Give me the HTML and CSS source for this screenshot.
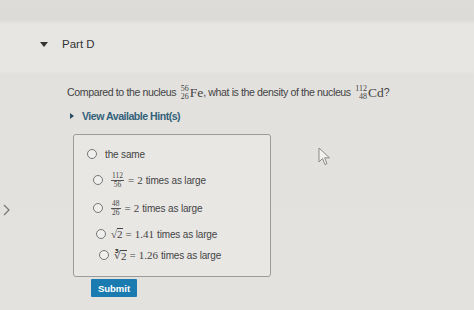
FILE: index.html
```html
<!DOCTYPE html>
<html>
<head>
<meta charset="utf-8">
<link rel="stylesheet" href="styles.css">
</head>
<body>
<div class="page">
  <div class="part-head">
    <span class="caret-down"></span>
    <span class="part-title">Part D</span>
  </div>
  <div class="question">
    Compared to the nucleus
    <span class="nuclide"><span class="scripts"><span class="a">56</span><span class="z">26</span></span><span class="sym">Fe</span></span>, what is the density of the nucleus
    <span class="nuclide"><span class="scripts"><span class="a">112</span><span class="z">48</span></span><span class="sym">Cd</span></span>?
  </div>
  <div class="hint">
    <span class="caret-right"></span>
    <span class="hint-text">View Available Hint(s)</span>
  </div>
  <div class="choices">
    <div class="opt o1"><span class="radio"></span><span class="lbl">the same</span></div>
    <div class="opt o2"><span class="radio"></span><span class="lbl"><span class="frac"><span class="num">112</span><span class="den">56</span></span><span class="m">=</span><span class="m">2</span> times as large</span></div>
    <div class="opt o3"><span class="radio"></span><span class="lbl"><span class="frac"><span class="num">48</span><span class="den">26</span></span><span class="m">=</span><span class="m">2</span> times as large</span></div>
    <div class="opt o4"><span class="radio"></span><span class="lbl"><span class="m root">√<span class="over">2</span></span><span class="m">=</span><span class="m">1.41</span> times as large</span></div>
    <div class="opt o5"><span class="radio"></span><span class="lbl"><span class="m root">∛<span class="over">2</span></span><span class="m">=</span><span class="m">1.26</span> times as large</span></div>
  </div>
  <button class="submit">Submit</button>
</div>
<svg class="cursor" width="14" height="20" viewBox="0 0 14 20"><path d="M1 1 L1 15 L4.5 11.5 L7 17.5 L9 16.6 L6.6 10.8 L11.5 10.8 Z" fill="#f2f1ee" stroke="#8a8a8a" stroke-width="1"/></svg>
<svg class="edge-mark" width="10" height="14" viewBox="0 0 10 14"><path d="M2 2 L7 7 L2 12" fill="none" stroke="#777" stroke-width="1.2"/></svg>
</body>
</html>
```
FILE: styles.css
```css
html, body {
  margin: 0;
  padding: 0;
}
body {
  width: 474px;
  height: 310px;
  overflow: hidden;
  position: relative;
  background: linear-gradient(180deg, #dddcd9 0px, #dcdbd8 20px, #e6e5e2 24px, #e7e6e3 70px, #e2e1de 75px, #e3e2df 310px);
  font-family: "Liberation Sans", Arial, sans-serif;
  color: #3a3a3a;
}
.page {
  padding: 36px 0 0 40px;
}
.part-head {
  display: flex;
  align-items: center;
  height: 16px;
}
.caret-down {
  width: 0;
  height: 0;
  border-left: 4px solid transparent;
  border-right: 4px solid transparent;
  border-top: 5px solid #333;
  margin-right: 14px;
}
.part-title {
  font-size: 11.5px;
  color: #333;
}
.question {
  margin: 32px 0 0 27px;
  font-size: 10.6px;
  letter-spacing: -0.4px;
  color: #444;
  height: 16px;
  line-height: 16px;
  white-space: nowrap;
}
.nuclide {
  display: inline-flex;
  align-items: center;
  vertical-align: middle;
  font-family: "Liberation Serif", "Times New Roman", serif;
  letter-spacing: 0;
  margin-left: 2px;
}
.scripts {
  display: inline-flex;
  flex-direction: column;
  align-items: flex-end;
  font-size: 8px;
  line-height: 8px;
  margin-right: 1px;
}
.sym {
  font-size: 13.5px;
}
.hint {
  display: flex;
  align-items: center;
  margin: 8px 0 0 30px;
  height: 16px;
}
.caret-right {
  width: 0;
  height: 0;
  border-top: 3.5px solid transparent;
  border-bottom: 3.5px solid transparent;
  border-left: 4px solid #2c4f66;
  margin-right: 8px;
}
.hint-text {
  font-size: 10.6px;
  letter-spacing: -0.5px;
  font-weight: bold;
  color: #33617a;
}
.choices {
  margin: 10px 0 0 33px;
  width: 198px;
  height: 143px;
  border: 1px solid #9c9c9a;
  border-radius: 3px;
  box-sizing: border-box;
  padding-top: 11px;
  background: #e8e7e4;
}
.opt {
  display: flex;
  align-items: center;
  font-size: 10px;
  letter-spacing: -0.15px;
  color: #444;
}
.o1 { padding-left: 13px; height: 16px; }
.o2 { padding-left: 19px; height: 20px; margin-top: 8px; }
.o3 { padding-left: 19px; height: 20px; margin-top: 8px; }
.o4 { padding-left: 22px; height: 16px; margin-top: 8px; }
.o5 { padding-left: 25px; height: 16px; margin-top: 5px; }
.radio {
  width: 8px;
  height: 8px;
  border: 1px solid #777;
  border-radius: 50%;
  background: #efefed;
  margin-right: 8px;
  flex: none;
}
.o4 .radio, .o5 .radio { margin-right: 5px; }
.lbl {
  display: inline-flex;
  align-items: center;
  white-space: nowrap;
}
.frac {
  display: inline-flex;
  flex-direction: column;
  align-items: center;
  font-family: "Liberation Serif", "Times New Roman", serif;
  font-size: 7.5px;
  line-height: 8px;
  margin-right: 4px;
  letter-spacing: 0;
}
.num {
  border-bottom: 0.8px solid #555;
  padding: 0 1px;
}
.m {
  font-family: "Liberation Serif", "Times New Roman", serif;
  font-size: 11px;
  margin-right: 3px;
  letter-spacing: 0;
}
.root {
  display: inline-flex;
  align-items: flex-end;
}
.over {
  border-top: 0.8px solid #444;
  line-height: 11px;
}
.submit {
  display: block;
  margin: 2px 0 0 51px;
  width: 46px;
  height: 18px;
  padding: 0;
  border: none;
  border-radius: 1px;
  background: #1a7bb0;
  color: #fff;
  font-family: "Liberation Sans", Arial, sans-serif;
  font-size: 9.5px;
  font-weight: bold;
}
.cursor {
  position: absolute;
  left: 318px;
  top: 147px;
}
.edge-mark {
  position: absolute;
  left: 2px;
  top: 203px;
}
```
